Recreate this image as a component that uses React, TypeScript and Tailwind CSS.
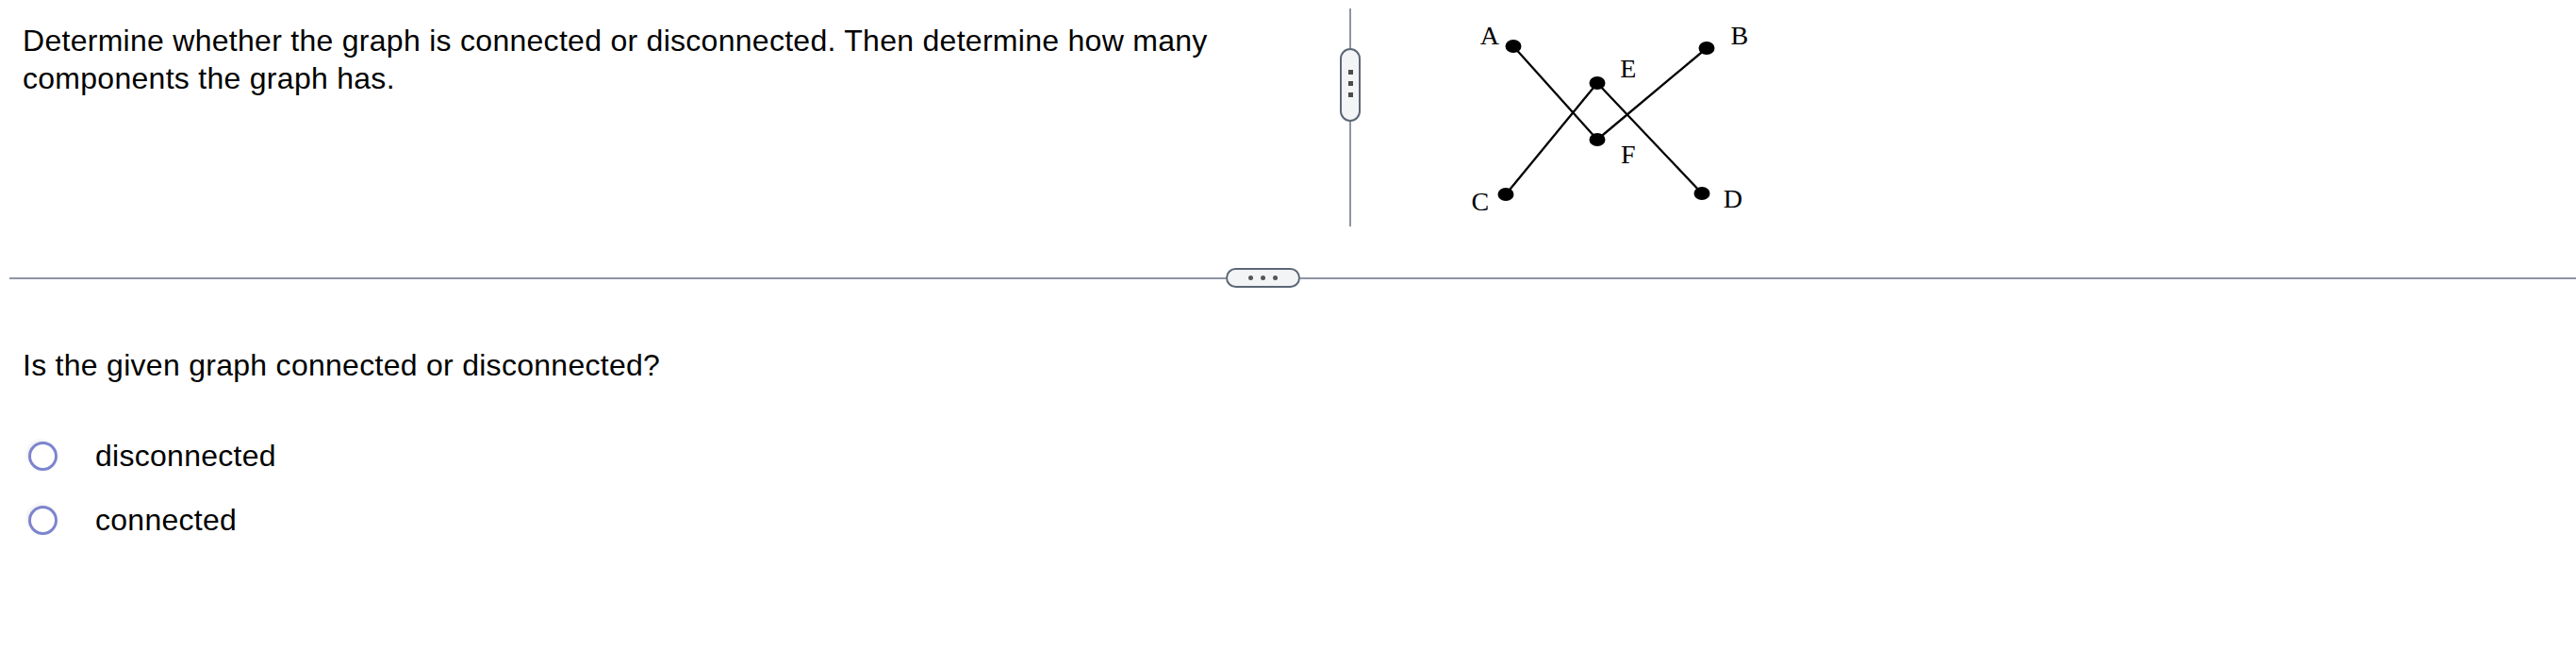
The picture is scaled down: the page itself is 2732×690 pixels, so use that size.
import React from "react";

const lineColor = "bg-[#8e94a3]";

function Graph() {
  // svg placed with its origin at page (1540, 0)
  const ox = 1540;
  const nodes: Record<string, [number, number]> = {
    A: [1605, 49],
    B: [1810, 51],
    E: [1694, 88],
    F: [1694, 148],
    C: [1597, 206],
    D: [1805, 205],
  };
  const edges: [string, string][] = [
    ["A", "F"],
    ["C", "E"],
    ["E", "D"],
    ["F", "B"],
  ];
  const labels: [string, number, number][] = [
    ["A", 1580, 47],
    ["B", 1845, 47],
    ["E", 1727, 82],
    ["F", 1727, 173],
    ["C", 1570, 223],
    ["D", 1838, 220],
  ];
  return (
    <svg width={340} height={240} viewBox="0 0 340 240" className="block">
      {edges.map(([a, b]) => (
        <line
          key={a + b}
          x1={nodes[a][0] - ox}
          y1={nodes[a][1]}
          x2={nodes[b][0] - ox}
          y2={nodes[b][1]}
          stroke="#000"
          strokeWidth={2.3}
        />
      ))}
      {Object.entries(nodes).map(([k, [x, y]]) => (
        <ellipse key={k} cx={x - ox} cy={y} rx={8.5} ry={7} fill="#000" />
      ))}
      {labels.map(([t, x, y]) => (
        <text
          key={t}
          x={x - ox}
          y={y}
          textAnchor="middle"
          fontSize={28}
          fontFamily="'Liberation Serif', 'Times New Roman', serif"
          fill="#000"
        >
          {t}
        </text>
      ))}
    </svg>
  );
}

function Radio({ label }: { label: string }) {
  return (
    <div className="flex items-center h-[40px]">
      <div className="w-[31px] h-[31px] rounded-full border-[3px] border-[#7d85cf] bg-white shadow-[-2px_-2px_3px_rgba(0,0,0,0.06)]" />
      <span className="ml-[40px]">{label}</span>
    </div>
  );
}

export default function App() {
  return (
    <div className="w-[2732px] h-[690px] bg-white overflow-hidden text-black font-['Liberation_Sans',Arial,sans-serif] text-[32px] leading-[40px] tracking-[0.28px]">
      <div className="flex h-[284px]">
        <div className="w-[1421px] pl-[24px] pr-[20px] pt-[23px]">
          Determine whether the graph is connected or disconnected. Then determine how many components the graph has.
        </div>
        <div className="w-[22px] flex flex-col items-center pt-[9px]">
          <div className={`w-[2px] h-[42px] ${lineColor}`} />
          <div className="w-[22px] h-[78px] rounded-full border-2 border-[#5c6776] bg-[#f3f4f6] flex flex-col items-center justify-center gap-[7px] pb-[4px]">
            <div className="w-[5px] h-[5px] bg-[#4b4b4b]" />
            <div className="w-[5px] h-[5px] bg-[#4b4b4b]" />
            <div className="w-[5px] h-[5px] bg-[#4b4b4b]" />
          </div>
          <div className={`w-[2px] h-[111px] ${lineColor}`} />
        </div>
        <div className="ml-[97px]">
          <Graph />
        </div>
      </div>

      <div className="flex items-center h-[21px] pl-[10px]">
        <div className={`w-[1290px] h-[2px] ${lineColor}`} />
        <div className="w-[79px] h-[21px] shrink-0 rounded-full border-2 border-[#5c6776] bg-[#f3f4f6] flex items-center justify-center gap-[8px]">
          <div className="w-[5px] h-[5px] rounded-full bg-[#555555]" />
          <div className="w-[5px] h-[5px] rounded-full bg-[#555555]" />
          <div className="w-[5px] h-[5px] rounded-full bg-[#555555]" />
        </div>
        <div className={`flex-1 h-[2px] ${lineColor}`} />
      </div>

      <div className="pl-[24px] mt-[62px]">Is the given graph connected or disconnected?</div>

      <div className="pl-[30px] mt-[56px] flex flex-col gap-[28px]">
        <Radio label="disconnected" />
        <Radio label="connected" />
      </div>
    </div>
  );
}
